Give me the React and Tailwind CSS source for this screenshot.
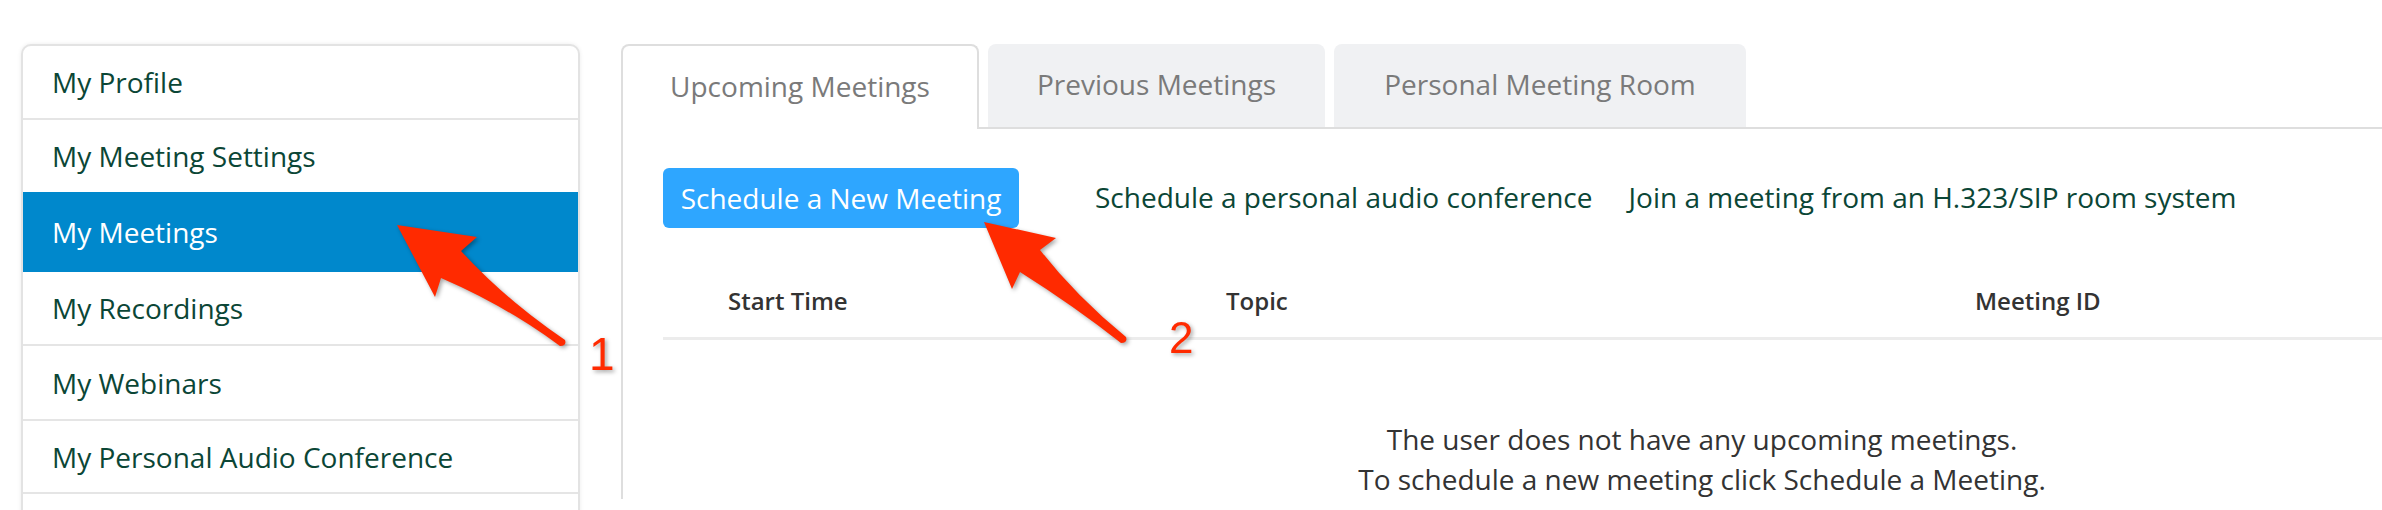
import React from "react";

// heights include the 2px bottom border (border-box)
const sideItems = [
  { label: "My Profile", h: "h-[74px]", border: true },
  { label: "My Meeting Settings", h: "h-[72px]", border: false },
  { label: "My Meetings", h: "h-[80px]", active: true },
  { label: "My Recordings", h: "h-[74px]", border: true },
  { label: "My Webinars", h: "h-[75px]", border: true },
  { label: "My Personal Audio Conference", h: "h-[73px]", border: true },
  { label: "", h: "h-[72px]", border: false },
];

function Sidebar() {
  return (
    <div className="w-[559px] shrink-0 self-start rounded-t-[10px] border-2 border-[#e3e3e3] bg-white shadow-[0_0_4px_rgba(0,0,0,0.08)] overflow-hidden">
      {sideItems.map((item, i) => (
        <div
          key={i}
          className={
            "flex items-center pl-[29px] text-[28px] " +
            item.h +
            (item.active ? " bg-[#0088cc] text-white" : " text-[#0b4636]") +
            (item.border ? " border-b-2 border-[#e5e5e5]" : "")
          }
        >
          {item.label}
        </div>
      ))}
    </div>
  );
}

function Tabs() {
  return (
    <div className="flex items-end gap-[9px] border-b-2 border-[#dedede] text-[28px] text-[#7a7a7a]">
      <div className="-mb-[2px] flex h-[85px] w-[358px] items-center justify-center rounded-t-[8px] border-2 border-b-0 border-[#dedede] bg-white pb-[4px]">
        Upcoming Meetings
      </div>
      <div className="flex h-[83px] w-[337px] items-center justify-center rounded-t-[8px] bg-[#f0f1f3] pb-[4px]">
        Previous Meetings
      </div>
      <div className="flex h-[83px] w-[412px] items-center justify-center rounded-t-[8px] bg-[#f0f1f3] pb-[4px]">
        Personal Meeting Room
      </div>
    </div>
  );
}

function MeetingsPanel() {
  return (
    <div className="border-l-2 border-[#dedede] pl-[40px] pr-[40px] pt-[39px]">
      <div className="flex items-center text-[28px]">
        <button className="flex h-[60px] w-[356px] items-center justify-center rounded-[6px] bg-[#2ea6ff] text-white">
          Schedule a New Meeting
        </button>
        <a className="ml-[76px] -mt-[3px] text-[#0b4636]">Schedule a personal audio conference</a>
        <a className="ml-[36px] -mt-[3px] text-[#0b4636]">Join a meeting from an H.323/SIP room system</a>
      </div>

      <div className="mt-[39px] grid h-[73px] grid-cols-[498px_749px_1fr] items-center border-b-[3px] border-[#ececec] pb-[3px] text-[24px] font-semibold text-[#333333]">
        <div className="pl-[65px]">Start Time</div>
        <div className="pl-[65px]">Topic</div>
        <div className="pl-[65px]">Meeting ID</div>
      </div>

      <div className="mt-[79px] text-center text-[28px] leading-[40px] text-[#333333]">
        <p>The user does not have any upcoming meetings.</p>
        <p>To schedule a new meeting click Schedule a Meeting.</p>
      </div>
    </div>
  );
}

function Annotations() {
  return (
    <svg
      className="pointer-events-none absolute left-0 top-0 drop-shadow-[2px_2px_2px_rgba(0,0,0,0.35)]"
      width="2382"
      height="510"
      viewBox="0 0 2382 510"
    >
      <path
        d="M397,225 L477,237 L461,251 Q507,301 565,340 Q567,346 560,346 Q506,306 441,278 L435,297 Z"
        fill="#ff2a00"
      />
      <path
        d="M984,222 L1056,238 L1040,250 Q1077,297 1126,337 Q1128,343 1121,343 Q1074,306 1020,272 L1012,289 Z"
        fill="#ff2a00"
      />
      <text x="589" y="370" fill="#ff2a00" fontSize="46" fontFamily="'Liberation Sans', Arial, sans-serif">
        1
      </text>
      <text x="1169" y="353" fill="#ff2a00" fontSize="44" fontFamily="'Liberation Sans', Arial, sans-serif">
        2
      </text>
    </svg>
  );
}

export default function App() {
  return (
    <div className="relative h-[510px] w-[2382px] overflow-hidden bg-white font-['Open_Sans',sans-serif]">
      <div className="flex gap-[41px] pl-[21px] pt-[44px]">
        <Sidebar />
        <div className="w-[2160px] shrink-0">
          <Tabs />
          <MeetingsPanel />
        </div>
      </div>
      <Annotations />
    </div>
  );
}
